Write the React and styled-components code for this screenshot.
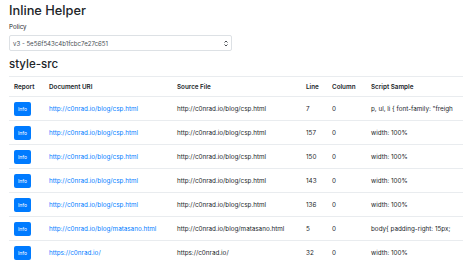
import React from 'react';
import styled, { createGlobalStyle } from 'styled-components';

const GlobalStyle = createGlobalStyle`
  html, body {
    margin: 0;
    padding: 0;
    background: #fff;
  }
  body {
    font-family: Inter, "Liberation Sans", sans-serif;
    color: #212529;
  }
`;

const Page = styled.div`
  padding: 0 11px 0 9px;
  width: 474px;
  box-sizing: border-box;
`;

const Title = styled.h1`
  margin: 3px 0 0;
  font-size: 12.8px;
  line-height: 16px;
  font-weight: 500;
`;

const Label = styled.label`
  display: block;
  margin-top: 4px;
  font-size: 6.2px;
  line-height: 8px;
  color: #212529;
`;

const SelectBox = styled.div`
  margin-top: 4px;
  width: 223px;
  height: 16px;
  box-sizing: border-box;
  border: 1px solid #dde1e5;
  border-radius: 2px;
  display: flex;
  align-items: center;
  justify-content: space-between;
  padding: 0 3px 0 3px;
  font-size: 6.1px;
  color: #495057;
`;

const SubTitle = styled.h2`
  margin: 6px 0 0;
  font-size: 11.5px;
  line-height: 14px;
  font-weight: 500;
`;

const Table = styled.table`
  margin-top: 5px;
  width: 454px;
  border-collapse: collapse;
  table-layout: fixed;
  font-size: 6.3px;
`;

const HeadCell = styled.th`
  height: 20px;
  padding: 0 5px;
  text-align: left;
  font-weight: 600;
  border-top: 1px solid #e9ecef;
  border-bottom: 1px solid #e9ecef;
  box-sizing: border-box;
  white-space: nowrap;
`;

const Cell = styled.td`
  height: 24px;
  padding: 0 5px;
  border-top: 1px solid #e9ecef;
  box-sizing: border-box;
  white-space: nowrap;
  overflow: hidden;
  vertical-align: middle;
`;

const Link = styled.a`
  color: #007bff;
  text-decoration: none;
`;

const InfoButton = styled.button`
  width: 17px;
  height: 14px;
  padding: 0;
  border: none;
  border-radius: 2px;
  background: #007bff;
  color: #fff;
  font-family: inherit;
  font-size: 5px;
  display: flex;
  align-items: center;
  justify-content: center;
`;

const Arrows = () => (
  <svg width="4" height="7" viewBox="0 0 4 7">
    <path d="M0.5 2.5 L2 1 L3.5 2.5 M0.5 4.5 L2 6 L3.5 4.5" fill="none" stroke="#343a40" strokeWidth="0.9" />
  </svg>
);

const rows = [
  { doc: 'http://c0nrad.io/blog/csp.html', src: 'http://c0nrad.io/blog/csp.html', line: 7, sample: 'p, ul, li { font-family: "freigh' },
  { doc: 'http://c0nrad.io/blog/csp.html', src: 'http://c0nrad.io/blog/csp.html', line: 157, sample: 'width: 100%' },
  { doc: 'http://c0nrad.io/blog/csp.html', src: 'http://c0nrad.io/blog/csp.html', line: 150, sample: 'width: 100%' },
  { doc: 'http://c0nrad.io/blog/csp.html', src: 'http://c0nrad.io/blog/csp.html', line: 143, sample: 'width: 100%' },
  { doc: 'http://c0nrad.io/blog/csp.html', src: 'http://c0nrad.io/blog/csp.html', line: 136, sample: 'width: 100%' },
  { doc: 'http://c0nrad.io/blog/matasano.html', src: 'http://c0nrad.io/blog/matasano.html', line: 5, sample: 'body{ padding-right: 15px;' },
  { doc: 'https://c0nrad.io/', src: 'https://c0nrad.io/', line: 32, sample: 'width: 100%' },
];

const App = () => (
  <Page>
    <GlobalStyle />
    <Title>Inline Helper</Title>
    <Label>Policy</Label>
    <SelectBox>
      <span>v3 - 5e56f543c4b1fcbc7e27c651</span>
      <Arrows />
    </SelectBox>
    <SubTitle>style-src</SubTitle>
    <Table>
      <colgroup>
        <col style={{ width: 35 }} />
        <col style={{ width: 128 }} />
        <col style={{ width: 129 }} />
        <col style={{ width: 26 }} />
        <col style={{ width: 39 }} />
        <col />
      </colgroup>
      <thead>
        <tr>
          <HeadCell>Report</HeadCell>
          <HeadCell>Document URI</HeadCell>
          <HeadCell>Source File</HeadCell>
          <HeadCell>Line</HeadCell>
          <HeadCell>Column</HeadCell>
          <HeadCell>Script Sample</HeadCell>
        </tr>
      </thead>
      <tbody>
        {rows.map((r, i) => (
          <tr key={i}>
            <Cell><InfoButton>Info</InfoButton></Cell>
            <Cell><Link href="#">{r.doc}</Link></Cell>
            <Cell>{r.src}</Cell>
            <Cell>{r.line}</Cell>
            <Cell>0</Cell>
            <Cell>{r.sample}</Cell>
          </tr>
        ))}
      </tbody>
    </Table>
  </Page>
);

export default App;
